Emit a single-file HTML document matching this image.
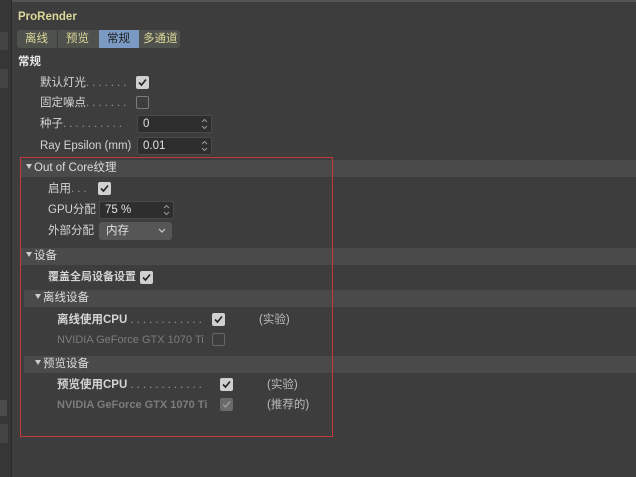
<!DOCTYPE html>
<html><head><meta charset="utf-8"><style>
*{margin:0;padding:0;box-sizing:border-box}
body{width:636px;height:477px;background:#3d3d3d;position:relative;overflow:hidden;font-family:"Liberation Sans","Noto Sans CJK SC",sans-serif;font-size:11.5px;color:#d4d4d4}
.a{position:absolute;white-space:nowrap}
.t{line-height:14px}
.cb{position:absolute;width:13px;height:13px;border-radius:2px;background:#d0d0d0}
.cb svg{position:absolute;left:1px;top:1px}
.ub{position:absolute;width:13px;height:13px;border-radius:2px;border:1px solid #7a7a7a}
.in{position:absolute;height:18px;background:#2e2e2e;border:1px solid #4a4a4a;border-radius:2px;color:#e0e0e0;padding-left:5px;line-height:16px}
.sp{position:absolute;right:3px;top:2px}
.hd{position:absolute;height:17px;background:#4a4a4a;color:#dcdcdc;line-height:17px;padding-left:5px}
.tri{display:inline-block;width:0;height:0;border-left:3.5px solid transparent;border-right:3.5px solid transparent;border-top:5px solid #ccc;vertical-align:2px;margin-right:2px}
.dots{color:#999;letter-spacing:3px}
.dim{color:#7c7c7c}
</style></head><body>
<div class="a" style="left:0;top:0;width:636px;height:2px;background:#555"></div>
<div class="a" style="left:0;top:0;width:11px;height:477px;background:#363636"></div>
<div class="a" style="left:11px;top:0;width:1px;height:477px;background:#2a2a2a"></div>
<div class="a" style="left:0;top:32px;width:8px;height:18px;background:#444"></div>
<div class="a" style="left:0;top:69px;width:8px;height:19px;background:#444"></div>
<div class="a" style="left:0;top:400px;width:7px;height:16px;background:#4c4c4c;border-radius:0 2px 2px 0"></div>
<div class="a" style="left:0;top:424px;width:8px;height:19px;background:#444"></div>

<div class="a t" style="left:18px;top:10px;color:#dcd89a;font-weight:bold">ProRender</div>
<div class="a" style="left:17px;top:30px;width:163px;height:18px;background:#4f514d;border-radius:3px;overflow:hidden">
<div class="a" style="left:40px;top:0;width:1px;height:18px;background:#3c3c3c"></div>
<div class="a" style="left:82px;top:0;width:40px;height:18px;background:#7b9ac3"></div>
<div class="a t" style="left:8px;top:2px;color:#dcd89a">离线</div>
<div class="a t" style="left:49px;top:2px;color:#dcd89a">预览</div>
<div class="a t" style="left:90px;top:2px;color:#1e1e1e">常规</div>
<div class="a t" style="left:126px;top:2px;color:#dcd89a">多通道</div>
</div>
<div class="a t" style="left:18px;top:55px;font-weight:bold;color:#e4e4e4">常规</div>

<div class="a t" style="left:40px;top:76px">默认灯光<span class="dots">.......</span></div>
<div class="cb" style="left:136px;top:76px"><svg width="11" height="11"><path d="M2 5.5 L4.5 8 L9 2.5" stroke="#222" stroke-width="1.6" fill="none"/></svg></div>
<div class="a t" style="left:40px;top:96px">固定噪点<span class="dots">.......</span></div>
<div class="ub" style="left:136px;top:96px"></div>
<div class="a t" style="left:40px;top:117px">种子<span class="dots">..........</span></div>
<div class="in" style="left:137px;top:115px;width:75px">0<svg class="sp" width="7" height="12"><path d="M1 4 L3.5 1.5 L6 4 M1 8 L3.5 10.5 L6 8" stroke="#999" fill="none"/></svg></div>
<div class="a t" style="left:40px;top:139px">Ray Epsilon (mm)</div>
<div class="in" style="left:137px;top:137px;width:75px">0.01<svg class="sp" width="7" height="12"><path d="M1 4 L3.5 1.5 L6 4 M1 8 L3.5 10.5 L6 8" stroke="#999" fill="none"/></svg></div>

<div class="hd" style="left:21px;top:160px;width:615px"><span class="tri"></span>Out of Core纹理</div>
<div class="a t" style="left:48px;top:182px">启用<span class="dots">...</span></div>
<div class="cb" style="left:98px;top:182px"><svg width="11" height="11"><path d="M2 5.5 L4.5 8 L9 2.5" stroke="#222" stroke-width="1.6" fill="none"/></svg></div>
<div class="a t" style="left:48px;top:203px">GPU分配</div>
<div class="in" style="left:99px;top:201px;width:75px">75 %<svg class="sp" width="7" height="12"><path d="M1 4 L3.5 1.5 L6 4 M1 8 L3.5 10.5 L6 8" stroke="#999" fill="none"/></svg></div>
<div class="a t" style="left:48px;top:224px">外部分配</div>
<div class="a" style="left:99px;top:222px;width:73px;height:18px;background:#565656;border-radius:3px;line-height:18px;padding-left:7px;color:#e0e0e0">内存<svg style="position:absolute;right:6px;top:6px" width="8" height="6"><path d="M1 1 L4 4 L7 1" stroke="#ccc" fill="none" stroke-width="1.2"/></svg></div>

<div class="hd" style="left:21px;top:248px;width:615px"><span class="tri"></span>设备</div>
<div class="a t" style="left:48px;top:270px;font-weight:bold;font-size:11px">覆盖全局设备设置</div>
<div class="cb" style="left:140px;top:271px"><svg width="11" height="11"><path d="M2 5.5 L4.5 8 L9 2.5" stroke="#222" stroke-width="1.6" fill="none"/></svg></div>
<div class="hd" style="left:24px;top:290px;width:612px;padding-left:11px"><span class="tri"></span>离线设备</div>
<div class="a t" style="left:57px;top:313px;font-weight:bold">离线使用CPU <span class="dots" style="font-weight:normal">............</span></div>
<div class="cb" style="left:212px;top:313px"><svg width="11" height="11"><path d="M2 5.5 L4.5 8 L9 2.5" stroke="#222" stroke-width="1.6" fill="none"/></svg></div>
<div class="a t" style="left:259px;top:313px;color:#bbb">(实验)</div>
<div class="a t dim" style="left:57px;top:333px;font-size:11px">NVIDIA GeForce GTX 1070 Ti</div>
<div class="ub" style="left:212px;top:333px;border-color:#666"></div>
<div class="hd" style="left:24px;top:356px;width:612px;padding-left:11px"><span class="tri"></span>预览设备</div>
<div class="a t" style="left:57px;top:378px;font-weight:bold">预览使用CPU <span class="dots" style="font-weight:normal">............</span></div>
<div class="cb" style="left:220px;top:378px"><svg width="11" height="11"><path d="M2 5.5 L4.5 8 L9 2.5" stroke="#222" stroke-width="1.6" fill="none"/></svg></div>
<div class="a t" style="left:267px;top:378px;color:#bbb">(实验)</div>
<div class="a t dim" style="left:57px;top:398px;font-weight:bold;font-size:11px">NVIDIA GeForce GTX 1070 Ti</div>
<div class="cb" style="left:220px;top:398px;background:#6a6a6a"><svg width="11" height="11"><path d="M2 5.5 L4.5 8 L9 2.5" stroke="#999" stroke-width="1.4" fill="none"/></svg></div>
<div class="a t" style="left:267px;top:398px;color:#bbb">(推荐的)</div>

<div class="a" style="left:20px;top:157px;width:313px;height:280px;border:1px solid #c23a3c"></div>
</body></html>
